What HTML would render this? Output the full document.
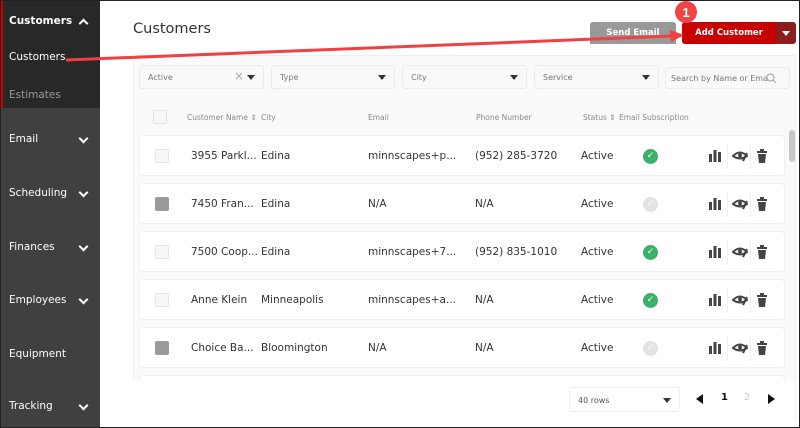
<!DOCTYPE html>
<html><head><style>
*{box-sizing:border-box;margin:0;padding:0}
body{width:800px;height:428px;overflow:hidden;background:#fff;font-family:"DejaVu Sans","Liberation Sans",sans-serif;position:relative}
.frame{position:absolute;left:0;top:0;width:800px;height:428px;border:1px solid #222;pointer-events:none;z-index:10}
.sb{position:absolute;left:0;top:0;width:100px;height:428px;background:#404040}
.sbt{position:absolute;left:0;top:0;width:100px;height:108px;background:#282828}
.red{position:absolute;left:1px;top:0;width:2px;height:108px;background:#c00}
.it{position:absolute;left:9px;color:#fff;font-size:10.5px}
.chev{position:absolute;left:80px;width:7px;height:7px;border-right:2px solid #fff;border-bottom:2px solid #fff;transform:rotate(45deg)}
.ab{position:absolute}
.panel{position:absolute;left:133px;top:55px;width:663px;height:366px;background:#fafafa;border:1px solid #eee;border-radius:3px}
.filt{position:absolute;top:65px;height:24px;background:#f9f9f9;border:1px solid #ebebeb;border-radius:3px;font-size:8px;color:#777;padding:7px 8px}
.tri{position:absolute;right:8px;top:9px;border-left:4px solid transparent;border-right:4px solid transparent;border-top:5px solid #333}
.hd{position:absolute;top:113px;font-size:7.5px;color:#888}
.row{position:absolute;left:139px;width:646px;height:41px;background:#fff;border:1px solid #efefef;border-radius:4px}
.cell{position:absolute;font-size:10.5px;color:#333;top:14px;white-space:nowrap}
.cb{position:absolute;left:15px;top:13px;width:14px;height:14px;border:1px solid #e6e6e6;background:#f7f7f7;border-radius:2px}
.cb.g{background:#999;border-color:#999}
.ok{position:absolute;left:503px;top:13px;width:15px;height:15px;border-radius:50%;background:#3cb06a;color:#fff;font-size:9px;text-align:center;line-height:15px}
.ok.n{background:#e3e3e3}
.ic{position:absolute;top:12px}
</style></head><body>
<div class="frame"></div>
<div class="sb"></div>
<div class="sbt"></div>
<div class="red"></div>
<div class="it" style="top:15px;font-weight:bold">Customers</div>
<div class="chev" style="top:20px;transform:rotate(225deg)"></div>
<div class="it" style="top:51px">Customers</div>
<div class="it" style="top:89px;color:#999">Estimates</div>
<div class="it" style="top:133px">Email</div><div class="chev" style="top:135px"></div>
<div class="it" style="top:187px">Scheduling</div><div class="chev" style="top:189px"></div>
<div class="it" style="top:241px">Finances</div><div class="chev" style="top:243px"></div>
<div class="it" style="top:294px">Employees</div><div class="chev" style="top:296px"></div>
<div class="it" style="top:348px">Equipment</div>
<div class="it" style="top:400px">Tracking</div><div class="chev" style="top:402px"></div>

<div class="ab" style="left:133px;top:21px;font-size:14.5px;color:#333">Customers</div>
<div class="ab" style="left:590px;top:22px;width:86px;height:22px;background:#999;border-radius:3px 3px 0 0;color:#fff;font-size:8.5px;font-weight:bold;text-align:center;line-height:22px">Send Email</div>
<div class="ab" style="left:682px;top:22px;width:94px;height:22px;background:#c90000;border-radius:3px 0 0 3px;color:#fff;font-size:8.5px;font-weight:bold;text-align:center;line-height:22px">Add Customer</div>
<div class="ab" style="left:776px;top:22px;width:20px;height:22px;background:#8f1c1c;border-radius:0 3px 3px 0"><div style="position:absolute;left:6px;top:9px;border-left:4px solid transparent;border-right:4px solid transparent;border-top:5px solid #fff"></div></div>

<div class="panel"></div>
<div class="filt" style="left:139px;width:125px">Active<span style="position:absolute;left:94px;top:3px;font-size:12px;color:#aaa">×</span><div class="tri"></div></div>
<div class="filt" style="left:271px;width:124px">Type<div class="tri"></div></div>
<div class="filt" style="left:402px;width:125px">City<div class="tri"></div></div>
<div class="filt" style="left:534px;width:125px">Service<div class="tri"></div></div>
<div class="filt" style="left:665px;width:125px;top:67px;height:22px;padding:6px 5px">Search by Name or Ema
<svg style="position:absolute;right:12px;top:5px" width="11" height="11" viewBox="0 0 11 11"><circle cx="4.5" cy="4.5" r="3.5" fill="none" stroke="#aaa" stroke-width="1.2"/><line x1="7" y1="7" x2="10" y2="10" stroke="#aaa" stroke-width="1.2"/></svg></div>

<div class="ab" style="left:153px;top:110px;width:14px;height:14px;border:1px solid #e3e3e3;background:#f7f7f7;border-radius:2px"></div>
<div class="hd" style="left:187px">Customer Name ⇕</div>
<div class="hd" style="left:261px">City</div>
<div class="hd" style="left:368px">Email</div>
<div class="hd" style="left:476px">Phone Number</div>
<div class="hd" style="left:583px">Status ⇕</div>
<div class="hd" style="left:619px">Email Subscription</div>

<div class="ab" style="left:789px;top:130px;width:6px;height:32px;background:#c8c8c8;border-radius:3px"></div>

<div id="rows"></div>
<script>
var d=[["3955 Parkl...","Edina","minnscapes+p...","(952) 285-3720",1,0],
["7450 Fran...","Edina","N/A","N/A",0,1],
["7500 Coop...","Edina","minnscapes+7...","(952) 835-1010",1,0],
["Anne Klein","Minneapolis","minnscapes+a...","N/A",1,0],
["Choice Ba...","Bloomington","N/A","N/A",0,1]];
var h="";
var icons='<svg class="ic" style="left:568px" width="14" height="16" viewBox="0 0 14 16"><rect x="1" y="6" width="3" height="8" fill="#444"/><rect x="5.5" y="2" width="3" height="12" fill="#444"/><rect x="10" y="4" width="3" height="10" fill="#444"/></svg>'+
'<svg class="ic" style="left:592px" width="16" height="16" viewBox="0 0 16 16"><path d="M1 8 Q8 1 15 8 Q8 13 1 8Z" fill="none" stroke="#444" stroke-width="2"/><circle cx="8" cy="7.5" r="2" fill="#444"/><line x1="11" y1="13" x2="15" y2="5" stroke="#444" stroke-width="2"/></svg>'+
'<svg class="ic" style="left:616px" width="12" height="16" viewBox="0 0 12 16"><rect x="1" y="3" width="10" height="2" fill="#444"/><rect x="4" y="1" width="4" height="2" fill="#444"/><path d="M2 6h8l-1 9H3z" fill="#444"/></svg>'+
'<div style="position:absolute;left:587px;top:8px;width:1px;height:25px;background:#f0f0f0"></div><div style="position:absolute;left:610px;top:8px;width:1px;height:25px;background:#f0f0f0"></div>';
for(var i=0;i<5;i++){var r=d[i];h+='<div class="row" style="top:'+(135+i*48)+'px"><div class="cb'+(r[5]?' g':'')+'"></div><div class="cell" style="left:51px">'+r[0]+'</div><div class="cell" style="left:121px">'+r[1]+'</div><div class="cell" style="left:228px">'+r[2]+'</div><div class="cell" style="left:335px">'+r[3]+'</div><div class="cell" style="left:441px">Active</div><div class="ok'+(r[4]?'':' n')+'">✓</div>'+icons+'</div>';}
h+='<div class="row" style="top:375px;height:10px;border-bottom:none"></div>';
document.getElementById('rows').innerHTML=h;
</script>
<div class="ab" style="left:133px;top:381px;width:662px;height:40px;background:#fff"></div>
<div class="ab" style="left:569px;top:387px;width:111px;height:25px;border:1px solid #eee;border-radius:3px;font-size:8px;color:#555;padding:8px 8px">40 rows<div class="tri" style="top:10px"></div></div>
<div class="ab" style="left:696px;top:394px;border-top:5px solid transparent;border-bottom:5px solid transparent;border-right:7px solid #111"></div>
<div class="ab" style="left:721px;top:392px;font-size:10px;font-weight:bold;color:#111">1</div>
<div class="ab" style="left:744px;top:392px;font-size:10px;color:#ccc">2</div>
<div class="ab" style="left:768px;top:394px;border-top:5px solid transparent;border-bottom:5px solid transparent;border-left:7px solid #111"></div>

<svg class="ab" style="left:0;top:0" width="800" height="428">
<line x1="66" y1="60" x2="672" y2="36" stroke="#f04040" stroke-width="3"/>
<polygon points="684,35 670,30 671,42" fill="#f04040"/>
<circle cx="686" cy="12" r="11" fill="#f04545"/>
<text x="686" y="17" fill="#fff" font-size="13" font-weight="bold" text-anchor="middle" font-family="Liberation Sans">1</text>
</svg>
</body></html>
